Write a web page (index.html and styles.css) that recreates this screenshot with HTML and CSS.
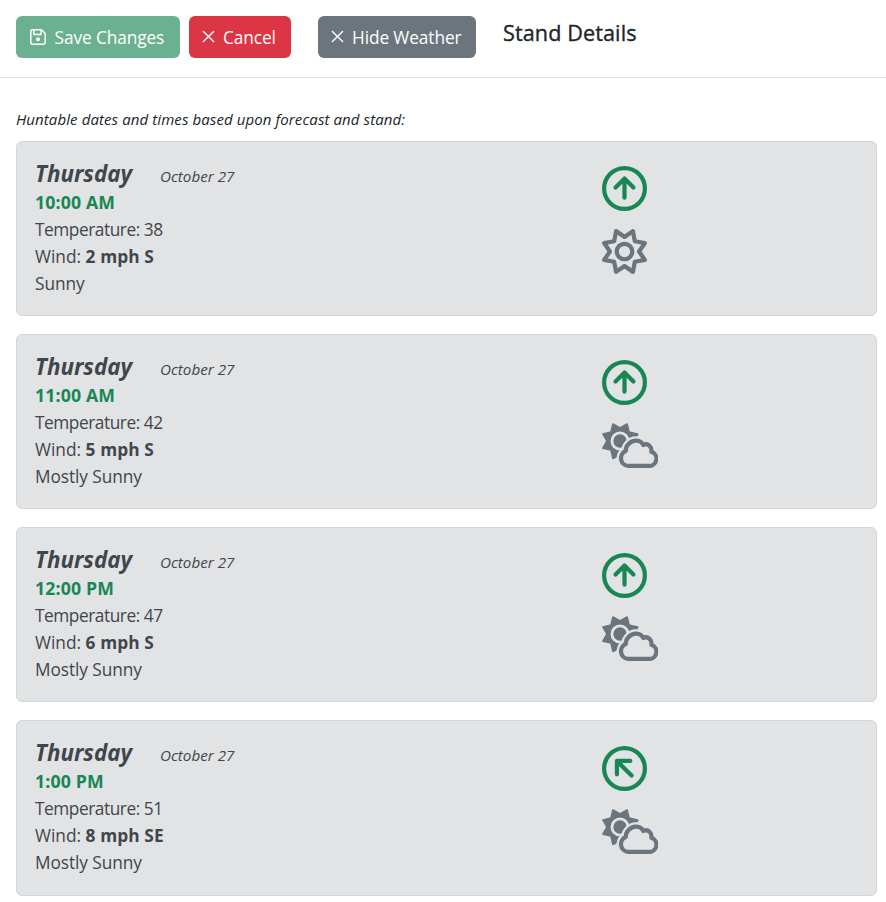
FILE: index.html
```html
<!DOCTYPE html>
<html lang="en">
<head>
<meta charset="utf-8">
<title>Stand Details</title>
<link rel="stylesheet" href="styles.css">
</head>
<body>
<svg class="sprite" aria-hidden="true">
  <symbol id="north" viewBox="0 0 512 512"><g class="line"><circle cx="256" cy="256" r="232"/><path d="M256 145V360M154 245L256 143L358 245"/></g></symbol>
  <symbol id="northwest" viewBox="0 0 512 512"><g class="line"><circle cx="256" cy="256" r="232"/><path d="M336 336L170 170M170 322V170H322"/></g></symbol>
  <symbol id="sun" viewBox="0 0 512 512"><path fill="currentColor" d="M375.700 19.700c-1.500-8-6.900-14.700-14.400-17.800s-16.100-2.200-22.800 2.400L256 61.100 173.500 4.200c-6.700-4.600-15.300-5.500-22.800-2.400s-12.900 9.800-14.400 17.800l-18.100 98.500L19.700 136.300c-8 1.500-14.700 6.900-17.800 14.400s-2.200 16.100 2.400 22.800L61.100 256 4.200 338.500c-4.600 6.700-5.500 15.300-2.400 22.800s9.800 13 17.800 14.400l98.500 18.100 18.100 98.500c1.500 8 6.900 14.700 14.400 17.800s16.100 2.200 22.800-2.400L256 450.900l82.500 56.900c6.700 4.600 15.300 5.500 22.800 2.400s12.900-9.800 14.400-17.800l18.100-98.500 98.500-18.100c8-1.500 14.700-6.900 17.800-14.400s2.200-16.100-2.400-22.800L450.900 256l56.900-82.500c4.600-6.700 5.500-15.300 2.400-22.800s-9.800-12.900-17.800-14.400l-98.500-18.100L375.700 19.700zM269.600 110l65.600-45.200 14.400 78.300c1.800 9.800 9.500 17.500 19.300 19.300l78.300 14.400L402 242.400c-5.700 8.200-5.700 19 0 27.200l45.200 65.600-78.300 14.400c-9.800 1.800-17.500 9.500-19.300 19.300l-14.400 78.300L269.600 402c-8.200-5.700-19-5.700-27.200 0l-65.600 45.200-14.400-78.300c-1.800-9.800-9.500-17.500-19.300-19.300L64.800 335.200 110 269.600c5.700-8.200 5.700-19 0-27.200L64.800 176.800l78.300-14.400c9.800-1.800 17.500-9.500 19.300-19.300l14.400-78.300L242.400 110c8.200 5.700 19 5.700 27.200 0zM256 368a112 112 0 1 0 0-224 112 112 0 1 0 0 224zM192 256a64 64 0 1 1 128 0 64 64 0 1 1 -128 0z"/></symbol>
  <symbol id="cloud-sun" viewBox="0 0 640 512">
    <path class="rays" d="M125 12L205 58L285 12L307 103L405 125L365 205L307 307L205 358L125 403L103 307L12 285L58 205L12 125L103 103Z"/>
    <circle class="ring" cx="205" cy="205" r="92"/>
    <path class="halo" d="M297 488H532A82 82 0 0 0 562 328C570 268 522 224 470 250C438 188 350 186 302 240C280 262 270 290 270 318C190 350 200 480 297 488Z"/>
    <path class="cloud" d="M297 488H532A82 82 0 0 0 562 328C570 268 522 224 470 250C438 188 350 186 302 240C280 262 270 290 270 318C190 350 200 480 297 488Z"/>
  </symbol>
  <symbol id="close" viewBox="0 0 14 14"><path class="thin" d="M1.500 1.500L12.500 12.500M12.500 1.500L1.500 12.500"/></symbol>
</svg>
<header class="toolbar">
  <button class="btn save"><svg class="disk" viewBox="0 0 16 16"><path class="thin" d="M2.500 .8H11.500L15.200 4.500V13.500Q15.200 15.200 13.500 15.200H2.500Q.8 15.200 .8 13.500V2.500Q.8 .8 2.500 .8ZM3.800 1V5.400H11V1"/><circle cx="8" cy="10.200" r="2" fill="currentColor"/></svg><span>Save Changes</span></button>
  <button class="btn cancel"><svg class="x"><use href="#close"/></svg><span>Cancel</span></button>
  <button class="btn hide"><svg class="x"><use href="#close"/></svg><span>Hide Weather</span></button>
  <h1>Stand Details</h1>
</header>
<main>
  <p class="intro">Huntable dates and times based upon forecast and stand:</p>
  <section class="card">
    <div class="info"><div class="date"><b>Thursday</b><i>October 27</i></div><div class="time">10:00 AM</div><div class="temp">Temperature: 38</div><div class="wind">Wind: <b>2 mph S</b></div><div class="sky">Sunny</div></div>
    <div class="icons"><svg class="direction"><use href="#north"/></svg><svg class="weather"><use href="#sun"/></svg></div>
  </section>
  <section class="card">
    <div class="info"><div class="date"><b>Thursday</b><i>October 27</i></div><div class="time">11:00 AM</div><div class="temp">Temperature: 42</div><div class="wind">Wind: <b>5 mph S</b></div><div class="sky">Mostly Sunny</div></div>
    <div class="icons"><svg class="direction"><use href="#north"/></svg><svg class="weather wide"><use href="#cloud-sun"/></svg></div>
  </section>
  <section class="card">
    <div class="info"><div class="date"><b>Thursday</b><i>October 27</i></div><div class="time">12:00 PM</div><div class="temp">Temperature: 47</div><div class="wind">Wind: <b>6 mph S</b></div><div class="sky">Mostly Sunny</div></div>
    <div class="icons"><svg class="direction"><use href="#north"/></svg><svg class="weather wide"><use href="#cloud-sun"/></svg></div>
  </section>
  <section class="card">
    <div class="info"><div class="date"><b>Thursday</b><i>October 27</i></div><div class="time">1:00 PM</div><div class="temp">Temperature: 51</div><div class="wind">Wind: <b>8 mph SE</b></div><div class="sky">Mostly Sunny</div></div>
    <div class="icons"><svg class="direction"><use href="#northwest"/></svg><svg class="weather wide"><use href="#cloud-sun"/></svg></div>
  </section>
</main>
</body>
</html>
```
FILE: styles.css
```css
* { box-sizing: border-box; }
body { margin: 0; background: #fff; color: #212529; font: 17.3px/27px "Open Sans", "Noto Sans", sans-serif; overflow: hidden; }
svg { display: block; flex: none; }
.sprite { position: absolute; width: 0; height: 0; }
.toolbar { display: flex; align-items: flex-start; height: 78px; padding: 16px; border-bottom: 1px solid #dee2e6; }
.btn { display: flex; align-items: center; height: 42px; padding: 0 0 0 14px; border: 0; border-radius: 6px; color: #fff; font: inherit; white-space: nowrap; }
.save { width: 164px; background: #6bb191; }
.cancel { width: 102px; margin-left: 9px; background: #dc3545; }
.hide { width: 158px; margin-left: 27px; background: #6c757d; }
.btn span { letter-spacing: -.1px; padding-top: 1px; }
.disk { width: 16px; height: 16px; margin-right: 8.500px; margin-top: -1px; }
.x { width: 13px; height: 13px; margin-right: 8px; margin-top: -1px; }
.cancel, .hide { padding-left: 13px; }
.thin { fill: none; stroke: currentColor; stroke-width: 1.5; stroke-linecap: round; stroke-linejoin: round; }
h1 { margin: 3px 0 0 27px; font-size: 21.6px; line-height: 27px; font-weight: 500; letter-spacing: .1px; -webkit-text-stroke: .35px currentColor; }
main { padding: 28.250px 9px 0 16px; }
.intro { margin: 0 0 7.500px; font-size: 15px; font-style: italic; letter-spacing: .1px; white-space: nowrap; }
.card { display: flex; height: 175.200px; margin-bottom: 18px; padding: 18px; border: 1px solid #d3d6d8; border-radius: 6px; background: #e1e3e5; color: #41464b; }
.info { width: 567px; }
.date { display: flex; align-items: baseline; height: 29px; line-height: 27px; }
.date b { width: 125px; font-size: 22.4px; font-style: italic; }
.date i { font-size: 15.2px; }
.time { font-size: 17.7px; letter-spacing: .15px; font-weight: 700; color: #198754; }
.temp { letter-spacing: -.45px; }
.wind b { letter-spacing: .12px; }
.sky { letter-spacing: -.08px; }
.icons { padding-top: 6.600px; }
.direction { width: 45px; height: 45px; color: #198754; }
.weather { width: 45px; height: 45px; margin-top: 18px; color: #6c757d; }
.wide { width: 56.250px; }
.line { fill: none; stroke: currentColor; stroke-width: 48; stroke-linecap: round; stroke-linejoin: round; }
.rays { fill: currentColor; stroke: currentColor; stroke-width: 20; stroke-linejoin: round; }
.ring { fill: currentColor; stroke: #e1e3e5; stroke-width: 32; }
.halo { fill: #e1e3e5; stroke: #e1e3e5; stroke-width: 100; }
.cloud { fill: #e1e3e5; stroke: currentColor; stroke-width: 48; stroke-linejoin: round; }
```
